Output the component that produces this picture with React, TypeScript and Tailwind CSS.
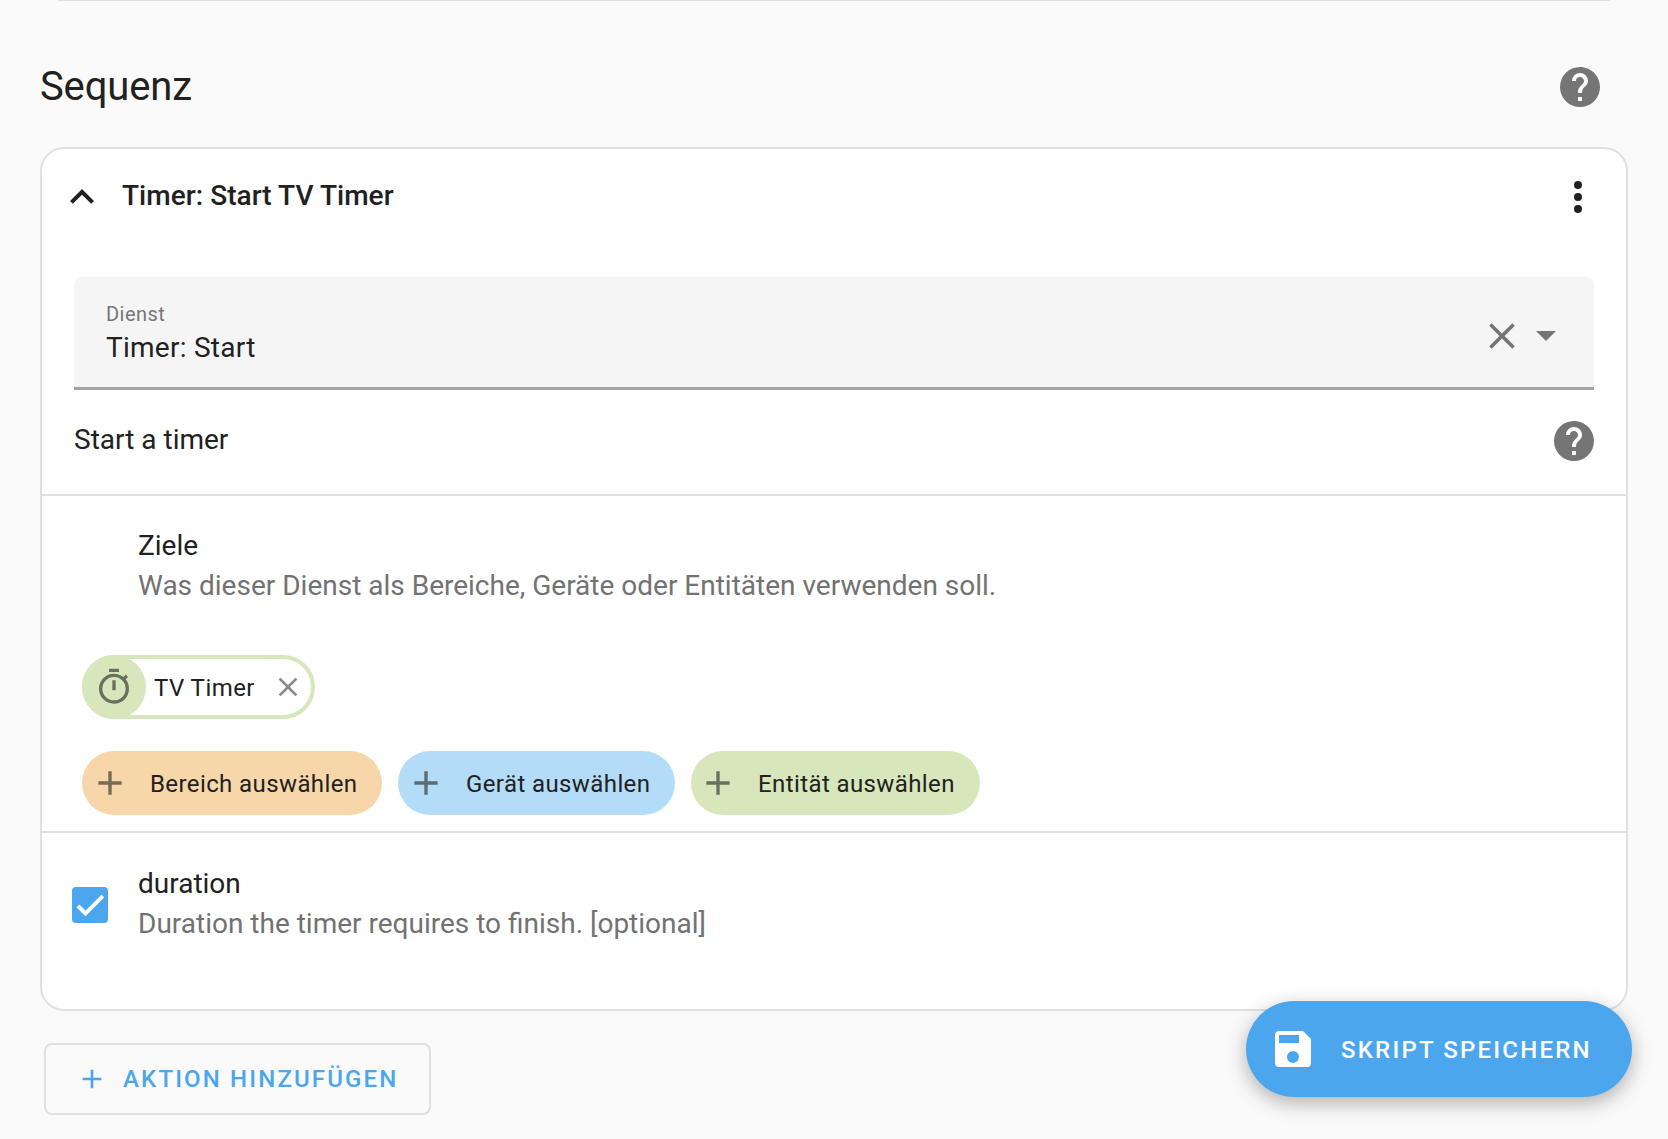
import type { ReactNode } from 'react';

const mdi = {
  help: 'M15.07,11.25L14.17,12.17C13.45,12.89 13,13.5 13,15H11V14.5C11,13.39 11.45,12.39 12.17,11.67L13.41,10.41C13.78,10.05 14,9.55 14,9C14,7.89 13.1,7 12,7A2,2 0 0,0 10,9H8A4,4 0 0,1 12,5A4,4 0 0,1 16,9C16,9.88 15.64,10.67 15.07,11.25M13,19H11V17H13M12,2A10,10 0 0,0 2,12A10,10 0 0,0 12,22A10,10 0 0,0 22,12C22,6.47 17.5,2 12,2Z',
  chevronUp: 'M7.41,15.41L12,10.83L16.59,15.41L18,14L12,8L6,14L7.41,15.41Z',
  dots: 'M12,16A2,2 0 0,1 14,18A2,2 0 0,1 12,20A2,2 0 0,1 10,18A2,2 0 0,1 12,16M12,10A2,2 0 0,1 14,12A2,2 0 0,1 12,14A2,2 0 0,1 10,12A2,2 0 0,1 12,10M12,4A2,2 0 0,1 14,6A2,2 0 0,1 12,8A2,2 0 0,1 10,6A2,2 0 0,1 12,4Z',
  close: 'M19,6.41L17.59,5L12,10.59L6.41,5L5,6.41L10.59,12L5,17.59L6.41,19L12,13.41L17.59,19L19,17.59L13.41,12L19,6.41Z',
  menuDown: 'M7,10L12,15L17,10H7Z',
  plus: 'M19,13H13V19H11V13H5V11H11V5H13V11H19V13Z',
  save: 'M15,9H5V5H15M12,19A3,3 0 0,1 9,16A3,3 0 0,1 12,13A3,3 0 0,1 15,16A3,3 0 0,1 12,19M17,3H5C3.89,3 3,3.9 3,5V19A2,2 0 0,0 5,21H19A2,2 0 0,0 21,19V7L17,3Z',
  timer: 'M12,20A7,7 0 0,1 5,13A7,7 0 0,1 12,6A7,7 0 0,1 19,13A7,7 0 0,1 12,20M19.03,7.39L20.45,5.97C20,5.46 19.55,5 19.04,4.56L17.62,6C16.07,4.74 14.12,4 12,4A9,9 0 0,0 3,13A9,9 0 0,0 12,22C17,22 21,18 21,13C21,10.88 20.26,8.93 19.03,7.39M11,14H13V8H11M15,1H9V3H15V1Z',
  check: 'M21,7L9,19L3.5,13.5L4.91,12.09L9,16.17L19.59,5.59L21,7Z',
};

function Icon({ d, className = '' }: { d: string; className?: string }) {
  return (
    <svg viewBox="0 0 24 24" className={`shrink-0 fill-current ${className}`}>
      <path d={d} />
    </svg>
  );
}

function PickerButton({ label, className, children }: { label: string; className: string; children?: ReactNode }) {
  return (
    <div className={`flex h-16 items-center rounded-[32px] ${className}`}>
      <Icon d={mdi.plus} className="h-10 w-10 text-[#212121]/60" />
      {children}
      <span className="ml-[20px] mt-[2px] text-[24px] tracking-[0.4px] text-[#212121]">{label}</span>
    </div>
  );
}

export default function App() {
  return (
    <div className="relative h-[1139px] w-[1668px] overflow-hidden bg-[#fafafa] font-['Roboto',sans-serif] text-[#212121]">
      {/* cut-off card above */}
      <div className="mx-[58px] h-[1px] bg-[#e0e0e0]" />

      {/* Section header */}
      <div className="flex h-[146px] items-start justify-between pl-[40px] pr-[64px] pt-[62px]">
        <h2 className="text-[40px] leading-[48px] tracking-[-0.15px]">Sequenz</h2>
        <Icon d={mdi.help} className="h-12 w-12 text-[#757575]" />
      </div>

      {/* Action card */}
      <div className="ml-[40px] h-[864px] w-[1588px] rounded-[24px] border-2 border-[#e0e0e0] bg-white">
        <div className="flex h-[96px] items-center justify-between pl-[16px] pr-[24px]">
          <div className="flex items-center">
            <Icon d={mdi.chevronUp} className="h-12 w-12" />
            <span className="mb-[2px] ml-[16px] text-[28px] font-medium tracking-[0.05px]">Timer: Start TV Timer</span>
          </div>
          <Icon d={mdi.dots} className="h-12 w-12" />
        </div>

        <div className="pl-[32px] pr-[32px] pt-[32px]">
          {/* Service select */}
          <div className="flex h-[113px] items-center justify-between rounded-t-[8px] border-b-[3px] border-[#a3a3a3] bg-[#f5f5f5] pl-[32px] pr-[24px]">
            <div className="mt-[3px] flex flex-col">
              <span className="text-[20px] leading-[24px] tracking-[0.45px] text-[#757575]">Dienst</span>
              <span className="mt-[4px] text-[28px] leading-[36px] tracking-[0.26px]">Timer: Start</span>
            </div>
            <div className="flex items-center text-[#757575]">
              <Icon d={mdi.close} className="-mr-[2px] mt-[8px] h-11 w-11" />
              <Icon d={mdi.menuDown} className="mt-[5px] h-12 w-12" />
            </div>
          </div>
          <div className="flex h-[104px] items-center justify-between">
            <span className="mb-[5px] text-[28px]">Start a timer</span>
            <Icon d={mdi.help} className="-mr-[4px] mb-[2px] h-12 w-12 text-[#757575]" />
          </div>
        </div>

        {/* Targets */}
        <div className="h-[337px] border-t-2 border-[#e0e0e0]">
          <div className="pl-[96px] pt-[30px]">
            <div className="text-[28px] leading-[40px]">Ziele</div>
            <div className="text-[28px] leading-[40px] text-[#727272]">Was dieser Dienst als Bereiche, Geräte oder Entitäten verwenden soll.</div>
          </div>
          <div className="mt-[49px] flex flex-col gap-[32px] pl-[40px]">
            <div className="flex h-16 w-[233px] items-center rounded-[32px] border-[4px] border-[#d7e7bb]">
              <div className="-ml-[4px] flex h-16 w-16 items-center justify-center rounded-full bg-[#d7e7bb]">
                <Icon d={mdi.timer} className="h-10 w-10 text-[#212121]/60" />
              </div>
              <span className="ml-[8px] mt-[2px] text-[24px] tracking-[0.45px]">TV Timer</span>
              <Icon d={mdi.close} className="ml-[17px] h-8 w-8 text-[#8a8a8a]" />
            </div>
            <div className="flex gap-[16px]">
              <PickerButton label="Bereich auswählen" className="w-[300px] bg-[#f7d7a9] pl-[8px]" />
              <PickerButton label="Gerät auswählen" className="w-[277px] bg-[#b3dcf8] pl-[8px]" />
              <PickerButton label="Entität auswählen" className="w-[289px] bg-[#d7e7bb] pl-[7px]" />
            </div>
          </div>
        </div>

        {/* duration field */}
        <div className="flex border-t-2 border-[#e0e0e0] pl-[30px] pt-[31px]">
          <div className="mt-[23px] flex h-9 w-9 items-center justify-center rounded-[4px] bg-[#4ba6ee]">
            <Icon d={mdi.check} className="h-9 w-9 stroke-white stroke-[0.7px] text-white" />
          </div>
          <div className="ml-[30px]">
            <div className="text-[28px] leading-[40px]">duration</div>
            <div className="text-[28px] leading-[40px] text-[#727272]">Duration the timer requires to finish. [optional]</div>
          </div>
        </div>
      </div>

      {/* Add action */}
      <div className="ml-[44px] mt-[32px] flex h-[72px] w-[387px] items-center rounded-[8px] border-2 border-[#e0e0e0] pl-[30px] text-[#4ba6ee]">
        <Icon d={mdi.plus} className="h-8 w-8" />
        <span className="ml-[15px] text-[24px] font-medium tracking-[2.15px]">AKTION HINZUFÜGEN</span>
      </div>

      {/* Save FAB */}
      <div className="absolute left-[1246px] top-[1001px] flex h-[96px] w-[386px] items-center rounded-[48px] bg-[#4ba6ee] pl-[23px] text-white shadow-[0_6px_20px_rgba(0,0,0,0.3)]">
        <Icon d={mdi.save} className="h-12 w-12" />
        <span className="ml-[24px] mt-[2px] text-[24px] font-medium tracking-[2.2px]">SKRIPT SPEICHERN</span>
      </div>
    </div>
  );
}
